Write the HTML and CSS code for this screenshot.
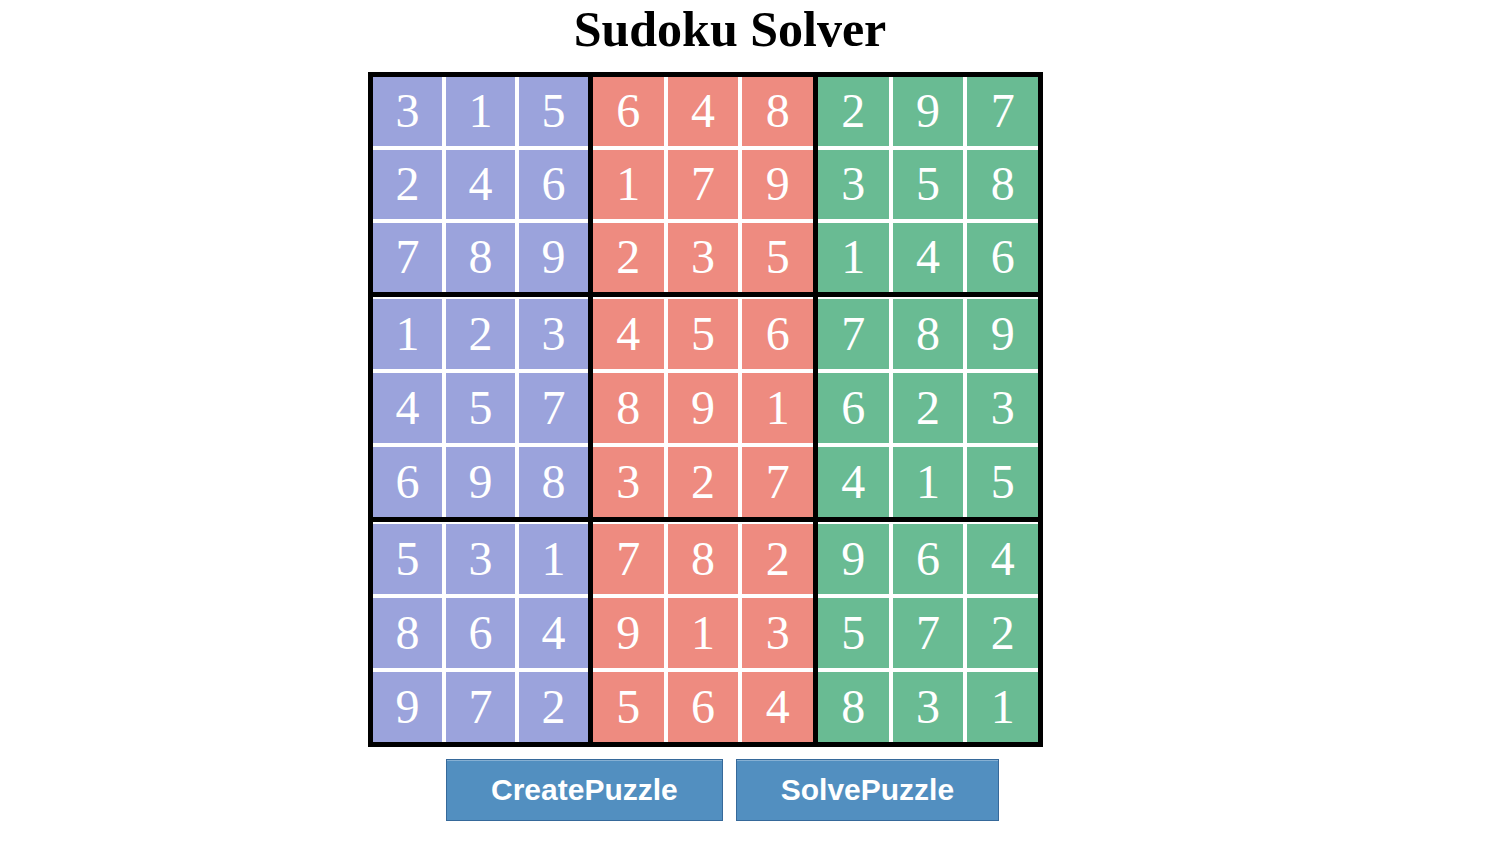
FILE: index.html
```html
<!DOCTYPE html>
<html>
<head>
<meta charset="utf-8">
<title>Sudoku Solver</title>
<link rel="stylesheet" href="styles.css">
</head>
<body>
<div class="wrap">
  <h1 class="title">Sudoku Solver</h1>
  <div class="board" id="board"></div>
  <div class="actions">
    <button class="btn">CreatePuzzle</button>
    <button class="btn">SolvePuzzle</button>
  </div>
</div>
<script src="app.js"></script>
</body>
</html>
```

FILE: styles.css
```css
html, body {
  margin: 0;
  padding: 0;
  background: #ffffff;
}

.wrap {
  margin-left: 368px;
  width: 724px;
}

.title {
  margin: 0;
  font-family: "Liberation Serif", "Times New Roman", serif;
  font-weight: bold;
  font-size: 50px;
  line-height: 58px;
  text-align: center;
  color: #000;
}

.board {
  margin-top: 14px;
  width: 675px;
  height: 675px;
  box-sizing: border-box;
  background: #000;
  padding: 5px;
  display: grid;
  grid-template-columns: 215px 220px 220px;
  grid-template-rows: 215px 220px 220px;
  gap: 5px;
}

.box {
  background: #ffffff;
  display: grid;
  grid-template-columns: repeat(3, 1fr);
  grid-template-rows: repeat(3, 1fr);
  gap: 4px;
}

.box.lower {
  padding-top: 2px;
}

.cell {
  display: flex;
  align-items: center;
  justify-content: center;
  padding-bottom: 2px;
  font-family: "Liberation Serif", "Times New Roman", serif;
  font-size: 48px;
  color: #ffffff;
}

.blue .cell { background: #9ba3dc; }
.red .cell { background: #ee8b80; }
.green .cell { background: #69bb93; }

.actions {
  margin-top: 12px;
  margin-left: 78px;
  display: flex;
  gap: 13px;
}

.btn {
  height: 62px;
  padding: 0 44px;
  background: #528fc0;
  border: 1px solid #36699a;
  box-shadow: inset 0 1px 0 rgba(255,255,255,0.3);
  color: #ffffff;
  font-family: "Liberation Sans", Arial, sans-serif;
  font-weight: bold;
  font-size: 30px;
  cursor: pointer;
}
```

FILE: app.js
```js
var grid = [
  [3,1,5,6,4,8,2,9,7],
  [2,4,6,1,7,9,3,5,8],
  [7,8,9,2,3,5,1,4,6],
  [1,2,3,4,5,6,7,8,9],
  [4,5,7,8,9,1,6,2,3],
  [6,9,8,3,2,7,4,1,5],
  [5,3,1,7,8,2,9,6,4],
  [8,6,4,9,1,3,5,7,2],
  [9,7,2,5,6,4,8,3,1]
];
var colors = ["blue", "red", "green"];
var board = document.getElementById("board");
for (var br = 0; br < 3; br++) {
  for (var bc = 0; bc < 3; bc++) {
    var box = document.createElement("div");
    box.className = "box " + colors[bc] + (br > 0 ? " lower" : "");
    for (var r = 0; r < 3; r++) {
      for (var c = 0; c < 3; c++) {
        var cell = document.createElement("div");
        cell.className = "cell";
        cell.textContent = grid[br * 3 + r][bc * 3 + c];
        box.appendChild(cell);
      }
    }
    board.appendChild(box);
  }
}
```
